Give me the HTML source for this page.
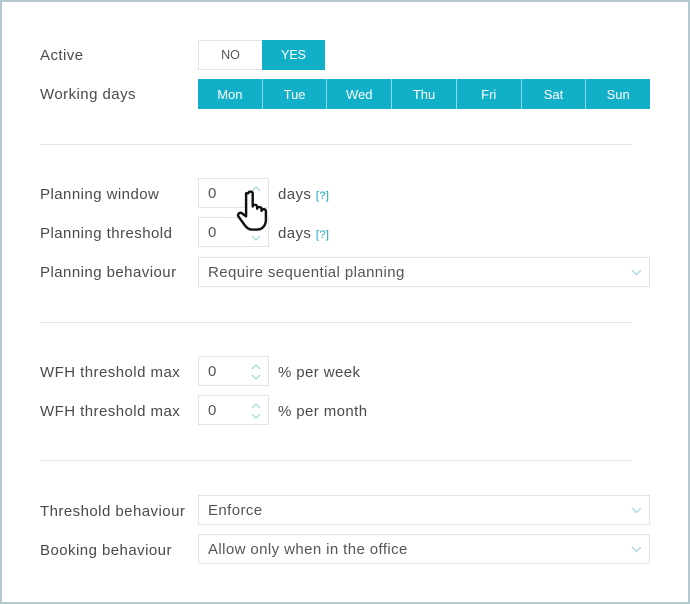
<!DOCTYPE html>
<html><head><style>
*{box-sizing:border-box;margin:0;padding:0}
body{width:690px;height:604px;background:#fff;font-family:"Liberation Sans",sans-serif;overflow:hidden}
.frame{position:absolute;left:0;top:0;width:690px;height:604px;border:2px solid #b3c9cf}
.a{position:absolute}
.lbl{position:absolute;left:40px;font-size:15px;color:#4a4a4a;line-height:20px;letter-spacing:0.45px}
.hr{position:absolute;left:40px;width:592px;height:1px;background:#dde8ea}
.tg{position:absolute;height:30px;font-size:12.5px;display:flex;align-items:center;justify-content:center}
.teal{background:#12b0c8;color:#fff}
.inp{position:absolute;left:198px;width:71px;height:30px;border:1px solid #dce6e8;font-size:15px;color:#555;padding-left:9px;line-height:29px}
.sp{position:absolute;right:7px;top:7px}
.sel{position:absolute;left:198px;width:452px;height:30px;border:1px solid #dce6e8;font-size:15px;color:#555;padding-left:9px;line-height:29px;letter-spacing:0.4px}
.unit{position:absolute;font-size:15px;color:#4a4a4a;line-height:20px;letter-spacing:0.4px}
.q{font-size:11px;color:#12a8c0}
</style></head><body>
<div class="frame"></div>
<div class="lbl" style="top:46px">Active</div>
<div class="tg" style="left:198px;top:40px;width:65px;border:1px solid #dce6e8;color:#555">NO</div>
<div class="tg teal" style="left:262px;top:40px;width:63px">YES</div>
<div class="lbl" style="top:85px">Working days</div>
<div class="a teal" style="left:198px;top:79px;width:452px;height:30px;display:flex">
<div class="tg teal" style="position:static;flex:1;font-size:13px">Mon</div>
<div class="tg teal" style="position:static;flex:1;font-size:13px;border-left:1px solid #8adbe7">Tue</div>
<div class="tg teal" style="position:static;flex:1;font-size:13px;border-left:1px solid #8adbe7">Wed</div>
<div class="tg teal" style="position:static;flex:1;font-size:13px;border-left:1px solid #8adbe7">Thu</div>
<div class="tg teal" style="position:static;flex:1;font-size:13px;border-left:1px solid #8adbe7">Fri</div>
<div class="tg teal" style="position:static;flex:1;font-size:13px;border-left:1px solid #8adbe7">Sat</div>
<div class="tg teal" style="position:static;flex:1;font-size:13px;border-left:1px solid #8adbe7">Sun</div>
</div>
<div class="hr" style="top:144px"></div>

<div class="lbl" style="top:185px">Planning window</div>
<div class="inp" style="top:178px">0<svg class="sp" width="10" height="16"><path d="M1 5l4-4 4 4" fill="none" stroke="#9fd3dc" stroke-width="1.2"/></svg></div>
<div class="unit" style="left:278px;top:185px">days <span class="q">[?]</span></div>
<div class="lbl" style="top:224px">Planning threshold</div>
<div class="inp" style="top:217px">0<svg class="sp" width="10" height="16"><path d="M1 11l4 4 4-4" fill="none" stroke="#9fd3dc" stroke-width="1.2"/></svg></div>
<div class="unit" style="left:278px;top:224px">days <span class="q">[?]</span></div>
<svg class="a" style="left:235px;top:190px" width="42" height="44" viewBox="0 0 38 40"><path d="M12 3c0-2 4-2 4 0v12c0-2 4-2 4 0v2c0-2 4-2 4 0v2c0-2 4-2 4 0v8c0 5-3 9-8 9h-5c-3 0-5-2-7-5l-5-7c-1-2 1-4 3-3l4 3V3z" fill="#fff" stroke="#111" stroke-width="2.2" stroke-linejoin="round"/></svg>
<div class="lbl" style="top:263px">Planning behaviour</div>
<div class="sel" style="top:257px">Require sequential planning<svg class="a" style="right:7px;top:11px" width="11" height="7"><path d="M1 1l4.5 4.5L10 1" fill="none" stroke="#9fd3dc" stroke-width="1.2"/></svg></div>
<div class="hr" style="top:322px"></div>

<div class="lbl" style="top:363px">WFH threshold max</div>
<div class="inp" style="top:356px">0<svg class="sp" width="10" height="16"><path d="M1 5l4-4 4 4M1 11l4 4 4-4" fill="none" stroke="#9fd3dc" stroke-width="1.2"/></svg></div>
<div class="unit" style="left:278px;top:363px">% per week</div>
<div class="lbl" style="top:402px">WFH threshold max</div>
<div class="inp" style="top:395px">0<svg class="sp" width="10" height="16"><path d="M1 5l4-4 4 4M1 11l4 4 4-4" fill="none" stroke="#9fd3dc" stroke-width="1.2"/></svg></div>
<div class="unit" style="left:278px;top:402px">% per month</div>
<div class="hr" style="top:460px"></div>

<div class="lbl" style="top:502px">Threshold behaviour</div>
<div class="sel" style="top:495px">Enforce<svg class="a" style="right:7px;top:11px" width="11" height="7"><path d="M1 1l4.5 4.5L10 1" fill="none" stroke="#9fd3dc" stroke-width="1.2"/></svg></div>
<div class="lbl" style="top:541px">Booking behaviour</div>
<div class="sel" style="top:534px">Allow only when in the office<svg class="a" style="right:7px;top:11px" width="11" height="7"><path d="M1 1l4.5 4.5L10 1" fill="none" stroke="#9fd3dc" stroke-width="1.2"/></svg></div>
</body></html>
